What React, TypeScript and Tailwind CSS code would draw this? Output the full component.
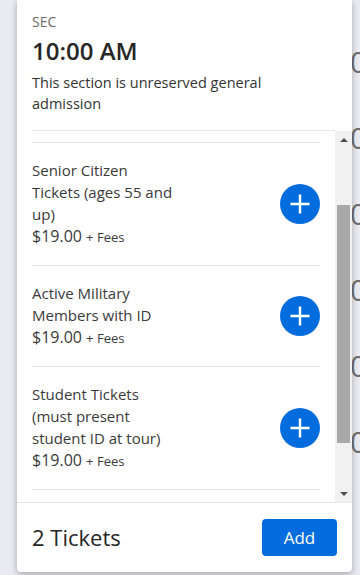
const BLUE = 'bg-[#026cdf]';

type Ticket = { id: string; lines: string[]; price: string };

const tickets: Ticket[] = [
  { id: 'senior', lines: ['Senior Citizen', 'Tickets (ages 55 and', 'up)'], price: '$19.00' },
  { id: 'military', lines: ['Active Military', 'Members with ID'], price: '$19.00' },
  { id: 'student', lines: ['Student Tickets', '(must present', 'student ID at tour)'], price: '$19.00' },
];

function PlusButton() {
  return (
    <button
      type="button"
      className={`flex h-10 w-10 flex-shrink-0 items-center justify-center rounded-full ${BLUE}`}
    >
      <svg width="20" height="20" viewBox="0 0 20 20" fill="none">
        <path d="M10 0.5v19M0.5 10h19" stroke="white" strokeWidth="2.4" />
      </svg>
    </button>
  );
}

function TicketRow({ t }: { t: Ticket }) {
  return (
    <div className="flex items-center justify-between border-t border-[#e6e6e6] py-4">
      <div className="text-[#3a3a3a]">
        <p className="text-[15px] leading-[22px]">
          {t.lines.map((l) => (
            <span key={l} className="block whitespace-nowrap">
              {l}
            </span>
          ))}
        </p>
        <p className="text-[16px] leading-[23px]">
          {t.price} <span className="text-[13px]">+ Fees</span>
        </p>
      </div>
      <PlusButton />
    </div>
  );
}

function FakeScrollbar() {
  return (
    <div className="flex w-[17px] flex-col bg-[#f1f1f1]">
      <div className="flex h-[17px] items-center justify-center">
        <div className="h-0 w-0 border-x-[4px] border-b-[4px] border-x-transparent border-b-[#505050]" />
      </div>
      <div className="flex-1 px-[2px] pt-[57px]">
        <div className="h-[238px] bg-[#a8a8a8]" />
      </div>
      <div className="flex h-[17px] items-center justify-center">
        <div className="h-0 w-0 border-x-[4px] border-t-[4px] border-x-transparent border-t-[#505050]" />
      </div>
    </div>
  );
}

export default function App() {
  const zeros = [0, 1, 2, 3, 4, 5];
  return (
    <div
      className="flex h-[575px] w-[360px] overflow-hidden bg-[#e9ebf0]"
      style={{ fontFamily: '"Open Sans", "Liberation Sans", sans-serif' }}
    >
      <div className="w-[17px] flex-shrink-0" />
      <div className="relative z-10 flex h-[572px] w-[335px] flex-shrink-0 flex-col rounded-b-[4px] bg-white shadow-[0_2px_6px_rgba(0,0,0,0.3)]">
        <div className="pt-3">
          <div className="px-[15px]">
            <p className="text-[14px] leading-5 text-[#6b6b6b]">SEC</p>
            <p className="mt-[3px] text-[24px] font-semibold leading-8 text-[#262626]">10:00 AM</p>
            <p className="mt-[5px] w-[265px] text-[14.5px] leading-[21px] text-[#333]">
              This section is unreserved general admission
            </p>
          </div>
          <div className="ml-[15px] mr-[17px] mt-4 h-px bg-[#e6e6e6]" />
        </div>
        <div className="flex h-[371px]">
          <div className="flex-1 overflow-hidden pl-[15px] pr-[15px] pt-[11px]">
            {tickets.map((t) => (
              <TicketRow key={t.id} t={t} />
            ))}
            <div className="border-t border-[#e6e6e6]" />
          </div>
          <FakeScrollbar />
        </div>
        <div className="flex flex-1 items-center justify-between border-t border-[#e6e6e6] px-[15px]">
          <span className="text-[22px] text-[#262626]">2 Tickets</span>
          <button
            type="button"
            className={`h-[37px] w-[75px] rounded-[4px] ${BLUE} text-[17px] font-medium text-white`}
          >
            Add
          </button>
        </div>
      </div>
      <div className="flex flex-1 flex-col overflow-hidden pt-[24px]">
        {zeros.map((i) => (
          <div key={i} className="flex h-[76px] items-center text-[29px] text-[#6f6f6f]">
            <span className="-ml-[2px]">0</span>
          </div>
        ))}
      </div>
    </div>
  );
}
